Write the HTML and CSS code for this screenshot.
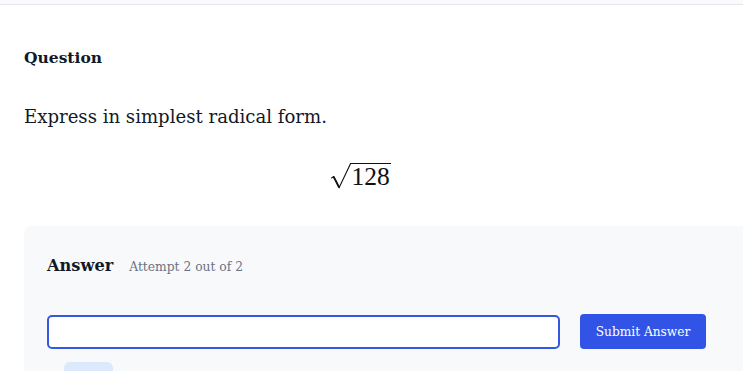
FILE: index.html
```html
<!DOCTYPE html>
<html lang="en">
<head>
<meta charset="utf-8">
<title>Question</title>
<link rel="stylesheet" href="styles.css">
</head>
<body>
<div class="topbar"></div>
<main class="page">
  <section class="question">
    <h2 class="label">Question</h2>
    <p class="prompt">Express in simplest radical form.</p>
    <div class="math">
      <span class="sqrt">
        <svg class="radical" width="21" height="26" viewBox="0 0 21 26" aria-hidden="true">
          <path d="M1.2 15.2 L3.6 13.6 L9.2 24.6 L20.6 0.5 L21 0.5" fill="none" stroke="#111" stroke-width="1.1" stroke-linejoin="miter"/>
          <path d="M3.6 13.6 L9.2 24.6" fill="none" stroke="#111" stroke-width="1.9"/>
        </svg>
        <span class="radicand">128</span>
      </span>
    </div>
  </section>
  <section class="answer">
    <div class="answer-head">
      <h3 class="answer-title">Answer</h3>
      <span class="attempt">Attempt 2 out of 2</span>
    </div>
    <div class="answer-row">
      <input class="answer-input" type="text" aria-label="Answer">
      <button class="submit" type="button">Submit Answer</button>
    </div>
    <div class="hint-chip"></div>
  </section>
</main>
</body>
</html>
```
FILE: styles.css
```css
html, body {
  margin: 0;
  padding: 0;
  background: #ffffff;
  overflow: hidden;
}
body {
  font-family: "DejaVu Serif", "Liberation Serif", serif;
  color: #111827;
}
.topbar {
  height: 4px;
  background: #f9fafb;
  border-bottom: 1px solid #e5e7eb;
}
.page {
  padding: 43px 0 0 24px;
}
.label {
  margin: 0;
  font-size: 15.5px;
  line-height: 20px;
  font-weight: 700;
}
.prompt {
  margin: 35px 0 0;
  font-size: 18.1px;
  line-height: 28px;
}
.math {
  width: 673px;
  margin-top: 32px;
  display: flex;
  justify-content: center;
}
.sqrt {
  display: inline-flex;
  align-items: flex-start;
}
.radical {
  display: block;
}
.radicand {
  font-family: "Liberation Serif", "Times New Roman", serif;
  font-size: 25.5px;
  line-height: 26px;
  border-top: 1px solid #111;
  padding: 0 1px 0 0;
  color: #111;
}
.answer {
  box-sizing: border-box;
  margin-top: 36px;
  background: #f8f9fb;
  border-top-left-radius: 8px;
  padding: 30px 0 0 23px;
  height: 145px;
  overflow: hidden;
}
.answer-head {
  display: flex;
  align-items: baseline;
  gap: 16px;
}
.answer-title {
  margin: 0;
  font-size: 16.2px;
  line-height: 20px;
  font-weight: 700;
}
.attempt {
  font-size: 12.3px;
  color: #6b7280;
}
.answer-row {
  margin-top: 38px;
  display: flex;
  align-items: center;
  gap: 20px;
}
.answer-input {
  box-sizing: border-box;
  width: 513px;
  height: 34px;
  border: 2px solid #3558e3;
  border-radius: 5px;
  background: #ffffff;
  outline: none;
  margin: 0;
  padding: 0 10px;
}
.submit {
  box-sizing: border-box;
  width: 126px;
  height: 35px;
  border: 0;
  border-radius: 4px;
  background: #3154e6;
  color: #ffffff;
  font-family: "DejaVu Serif", "Liberation Serif", serif;
  font-size: 12.2px;
  margin: 0;
  padding: 0;
}
.hint-chip {
  margin: 13px 0 0 17px;
  width: 49px;
  height: 30px;
  border-radius: 6px;
  background: #dce8fc;
}
```
